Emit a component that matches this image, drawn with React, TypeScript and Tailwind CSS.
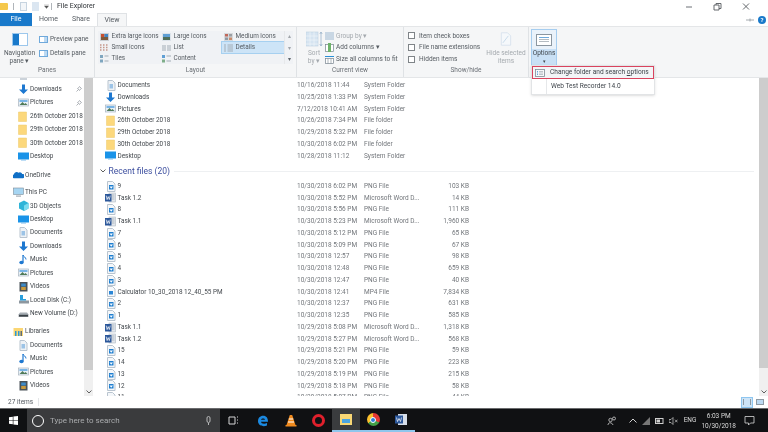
import React from "react";

const font = "font-['Roboto',sans-serif]";

function Doc() {
  return (
    <svg width="10" height="11" viewBox="0 0 10 11" className="shrink-0">
      <path d="M2 .5h4.500L9 3v7.500H2z" fill="#eef2f6" stroke="#b9c4cf" />
      <rect x="3.500" y="4" width="3.500" height="4.500" fill="#9cc3e6" />
    </svg>
  );
}
function Png() {
  return (
    <svg width="10" height="11" viewBox="0 0 10 11" className="shrink-0">
      <path d="M1.500.5h5l2.500 2.500v7.500H1.500z" fill="#f4f7fa" stroke="#b9c4cf" />
      <rect x="3" y="4" width="4.500" height="4.500" fill="#1f7fd0" />
      <path d="M3.500 5.500h3.500L5.200 7.800z" fill="#fff" />
    </svg>
  );
}
function Mp4() {
  return (
    <svg width="10" height="11" viewBox="0 0 10 11" className="shrink-0">
      <path d="M1.500.5h5l2.500 2.500v7.500H1.500z" fill="#f8fafc" stroke="#b9c4cf" />
      <rect x="3" y="5" width="4" height="3.500" fill="#2b86d6" />
    </svg>
  );
}
function Word() {
  return (
    <svg width="11" height="11" viewBox="0 0 11 11" className="shrink-0">
      <rect x="4" y="1" width="6.500" height="9" fill="#e3e7ec" stroke="#aeb8c2" strokeWidth=".6" />
      <path d="M6.500 3h3M6.500 5h3M6.500 7h3" stroke="#9aa6b2" strokeWidth=".7" />
      <rect x="0" y="2" width="6.500" height="7.500" fill="#2b579a" />
      <path d="M1.200 3.600l.9 4 1.100-3 1.100 3 .9-4" stroke="#fff" strokeWidth=".7" fill="none" />
    </svg>
  );
}
function Folder() {
  return (
    <svg width="9" height="11" viewBox="0 0 9 11" className="shrink-0">
      <path d="M.5 1h8v9.500h-8z" fill="#fcd87c" stroke="#ecc868" strokeWidth=".5" />
    </svg>
  );
}
function Desktop() {
  return (
    <svg width="11" height="11" viewBox="0 0 11 11" className="shrink-0">
      <rect x="0" y="1.500" width="11" height="7" fill="#1a93e8" />
      <rect x="3" y="8.500" width="5" height="1" fill="#7cbcec" />
    </svg>
  );
}
function DownArrow() {
  return (
    <svg width="11" height="11" viewBox="0 0 11 11" className="shrink-0">
      <path d="M4 .5h3v5h3l-4.500 4.500L1 5.500h3z" fill="#1e78d0" />
    </svg>
  );
}
function Pic() {
  return (
    <svg width="11" height="11" viewBox="0 0 11 11" className="shrink-0">
      <rect x=".5" y="2" width="10" height="7" fill="#eaf1f7" stroke="#a8b4bf" strokeWidth=".7" />
      <path d="M1.500 8l3-3 2 2 1-1 2 2z" fill="#4f7a58" />
      <rect x="1.500" y="3" width="8" height="2" fill="#79b4e6" />
    </svg>
  );
}
function Music() {
  return (
    <svg width="11" height="11" viewBox="0 0 11 11" className="shrink-0">
      <path d="M5 1v7" stroke="#1e78d0" strokeWidth="1.200" />
      <ellipse cx="3.500" cy="8.500" rx="2.200" ry="1.700" fill="#1e78d0" />
      <path d="M5 1c.5 2 3 2 3 4.500" stroke="#1e78d0" strokeWidth="1" fill="none" />
    </svg>
  );
}
function Videos() {
  return (
    <svg width="11" height="11" viewBox="0 0 11 11" className="shrink-0">
      <rect x="1.500" y="1" width="8" height="9.500" fill="#4a5258" />
      <rect x="3.200" y="2.500" width="4.600" height="3" fill="#3e8bc8" />
      <rect x="3.200" y="6" width="4.600" height="3" fill="#c99a3c" />
    </svg>
  );
}
function Cube() {
  return (
    <svg width="11" height="11" viewBox="0 0 11 11" className="shrink-0">
      <path d="M1 3l5-2.500L10.500 3v5.500L6 11 1 8.500z" fill="#2fb4d8" />
      <path d="M6 5.500L10.500 3v5.500L6 11z" fill="#7bdcf0" />
    </svg>
  );
}
function Disk() {
  return (
    <svg width="11" height="11" viewBox="0 0 11 11" className="shrink-0">
      <rect x="1" y="6.500" width="10" height="3" fill="#8d979f" />
      <rect x="2" y="1" width="3" height="5.500" fill="#2a9fdc" />
      <rect x="5" y="5" width="3" height="1.500" fill="#2a9fdc" />
    </svg>
  );
}
function Drive() {
  return (
    <svg width="11" height="11" viewBox="0 0 11 11" className="shrink-0">
      <path d="M2 4.500h7L10.500 6.500v2.500H.5V6.500z" fill="#a7aeb4" />
      <rect x="1" y="6.800" width="9" height="1.800" fill="#3a4146" />
    </svg>
  );
}
function Cloud() {
  return (
    <svg width="11" height="9" viewBox="0 0 12 9" className="shrink-0">
      <path d="M1 8.500a2 2 0 010-4 3 3 0 015-1.800 2.500 2.500 0 014 1.300 2.300 2.300 0 011 4.500z" fill="#0f6fc6" />
    </svg>
  );
}
function Pc() {
  return (
    <svg width="11" height="11" viewBox="0 0 11 11" className="shrink-0">
      <rect x=".5" y="1" width="10" height="6.500" fill="#a6d5f2" stroke="#7d8c99" strokeWidth=".6" />
      <rect x="3" y="8.500" width="5" height="1.200" fill="#a4adb5" />
    </svg>
  );
}
function Lib() {
  return (
    <svg width="11" height="11" viewBox="0 0 11 11" className="shrink-0">
      <path d="M.5 2h9.500v8H.5z" fill="#fbd673" />
      <rect x="2" y="5" width="1.500" height="5" fill="#2d9ad9" />
      <rect x="5" y="5" width="1.500" height="5" fill="#2d9ad9" />
      <rect x="7.500" y="5" width="1.500" height="5" fill="#5d6d7a" />
    </svg>
  );
}
function Pin() {
  return (
    <svg width="6" height="6" viewBox="0 0 6 6" className="shrink-0">
      <path d="M3.500.5l2 2-1 .5-1 1.500-2-2 1.500-1zM2 4l-1.500 1.500" stroke="#9aa0a6" strokeWidth=".8" fill="none" />
    </svg>
  );
}

function NavItem({ icon, label, pin, cls }: { icon: React.ReactNode; label: string; pin?: boolean; cls?: string }) {
  return (
    <div className={`flex h-[13.450px] items-center whitespace-nowrap ${cls ?? "pl-[18px]"}`}>
      <span className="flex w-[12px] shrink-0 justify-start">{icon}</span>
      <span className="text-[6.400px] text-[#43484d] leading-none">{label}</span>
      {pin && <span className="absolute left-[76px]"><Pin /></span>}
    </div>
  );
}

type Row = { icon: React.ReactNode; name: string; date: string; type: string; size?: string };

const top: Row[] = [
  { icon: <Doc />, name: "Documents", date: "10/16/2018 11:44", type: "System Folder" },
  { icon: <DownArrow />, name: "Downloads", date: "10/25/2018 1:33 PM", type: "System Folder" },
  { icon: <Pic />, name: "Pictures", date: "7/12/2018 10:41 AM", type: "System Folder" },
  { icon: <Folder />, name: "26th October 2018", date: "10/26/2018 7:34 PM", type: "File folder" },
  { icon: <Folder />, name: "29th October 2018", date: "10/29/2018 5:32 PM", type: "File folder" },
  { icon: <Folder />, name: "30th October 2018", date: "10/30/2018 6:02 PM", type: "File folder" },
  { icon: <Desktop />, name: "Desktop", date: "10/28/2018 11:12", type: "System Folder" },
];
const recent: Row[] = [
  { icon: <Png />, name: "9", date: "10/30/2018 6:02 PM", type: "PNG File", size: "103 KB" },
  { icon: <Word />, name: "Task 1.2", date: "10/30/2018 5:52 PM", type: "Microsoft Word D...", size: "14 KB" },
  { icon: <Png />, name: "8", date: "10/30/2018 5:56 PM", type: "PNG File", size: "111 KB" },
  { icon: <Word />, name: "Task 1.1", date: "10/30/2018 5:23 PM", type: "Microsoft Word D...", size: "1,960 KB" },
  { icon: <Png />, name: "7", date: "10/30/2018 5:12 PM", type: "PNG File", size: "65 KB" },
  { icon: <Png />, name: "6", date: "10/30/2018 5:09 PM", type: "PNG File", size: "67 KB" },
  { icon: <Png />, name: "5", date: "10/30/2018 12:57", type: "PNG File", size: "98 KB" },
  { icon: <Png />, name: "4", date: "10/30/2018 12:48", type: "PNG File", size: "659 KB" },
  { icon: <Png />, name: "3", date: "10/30/2018 12:47", type: "PNG File", size: "40 KB" },
  { icon: <Mp4 />, name: "Calculator 10_30_2018 12_40_55 PM", date: "10/30/2018 12:41", type: "MP4 File", size: "7,834 KB" },
  { icon: <Png />, name: "2", date: "10/30/2018 12:37", type: "PNG File", size: "631 KB" },
  { icon: <Png />, name: "1", date: "10/30/2018 12:35", type: "PNG File", size: "585 KB" },
  { icon: <Word />, name: "Task 1.1", date: "10/29/2018 5:08 PM", type: "Microsoft Word D...", size: "1,318 KB" },
  { icon: <Word />, name: "Task 1.2", date: "10/29/2018 5:27 PM", type: "Microsoft Word D...", size: "568 KB" },
  { icon: <Png />, name: "15", date: "10/29/2018 5:21 PM", type: "PNG File", size: "59 KB" },
  { icon: <Png />, name: "14", date: "10/29/2018 5:20 PM", type: "PNG File", size: "223 KB" },
  { icon: <Png />, name: "13", date: "10/29/2018 5:19 PM", type: "PNG File", size: "215 KB" },
  { icon: <Png />, name: "12", date: "10/29/2018 5:18 PM", type: "PNG File", size: "58 KB" },
  { icon: <Png />, name: "11", date: "10/29/2018 5:07 PM", type: "PNG File", size: "44 KB" },
];

function FileRow({ r }: { r: Row }) {
  return (
    <div className="flex h-[11.750px] shrink-0 items-center text-[6.500px] leading-none whitespace-nowrap">
      <div className="flex w-[204px] shrink-0 items-center gap-[1.500px] pl-[12px] text-[6.400px] text-[#43484d]">
        <span className="flex w-[11px] justify-center">{r.icon}</span>
        <span>{r.name}</span>
      </div>
      <div className="w-[67px] shrink-0 text-[#72767b]">{r.date}</div>
      <div className="w-[60px] shrink-0 text-[#72767b]">{r.type}</div>
      <div className="w-[45px] shrink-0 text-right text-[#72767b]">{r.size}</div>
    </div>
  );
}

function GalIcon({ kind }: { kind: string }) {
  const g = "#a3adb6";
  return (
    <svg width="9" height="8" viewBox="0 0 9 8" className="shrink-0">
      {kind === "extra" && (<><rect width="9" height="8" fill="#c9ced3" /><rect x="1" y="1" width="3.500" height="3" fill="#c8502f" /><rect x="4.500" y="1" width="3.500" height="3" fill="#3d86c6" /><rect x="1" y="4" width="7" height="3" fill="#7c5a3d" /></>)}
      {kind === "large" && (<><rect width="9" height="8" fill="#dce3ea" /><rect x="1" y="1" width="7" height="3" fill="#5f9fd4" /><rect x="1" y="4" width="7" height="3" fill="#4f6f5a" /></>)}
      {kind === "medium" && (<><rect width="9" height="8" fill="#d6d9dc" /><rect x="1" y="1" width="3" height="2.500" fill="#c0685a" /><rect x="5" y="1" width="3" height="2.500" fill="#9a9fa4" /><rect x="1" y="4.500" width="3" height="2.500" fill="#8f9aa3" /><rect x="5" y="4.500" width="3" height="2.500" fill="#c98a6a" /></>)}
      {kind === "small" && (<path d="M0 1h1.500M3 1h1.500M6 1h1.500M0 3.500h1.500M3 3.500h1.500M6 3.500h1.500M0 6h1.500M3 6h1.500M6 6h1.500" stroke="#c4978a" strokeWidth="1.300" />)}
      {kind === "list" && (<path d="M1 1v6M3 1v6M6 1v6M8 1v6" stroke={g} strokeWidth="1" />)}
      {kind === "details" && (<path d="M0 1h2M3.500 1h5.500M0 3h2M3.500 3h5.500M0 5h2M3.500 5h5.500M0 7h2M3.500 7h5.500" stroke={g} strokeWidth="1" />)}
      {kind === "tiles" && (<><rect x="0" y="0" width="3" height="3" fill="#7fa6bf" /><rect x="0" y="4.500" width="3" height="3" fill="#7fa6bf" /><path d="M4.500 1h4M4.500 6h4" stroke={g} /></>)}
      {kind === "content" && (<><rect x="0" y="0" width="3" height="3" fill="#5f9fd4" /><rect x="0" y="4.500" width="3" height="3" fill="#7fae8a" /><path d="M4.500 1h4.500M4.500 6h4.500" stroke={g} /></>)}
    </svg>
  );
}

function Gal({ label, kind, selected }: { label: string; kind: string; selected?: boolean }) {
  return (
    <div className={`flex h-[11px] w-[62px] items-center gap-[2.500px] pl-[2px] ${selected ? "bg-[#cde4f7] outline outline-[#a6d0f0]" : ""}`}>
      <GalIcon kind={kind} />
      <span className="text-[6.400px] leading-none text-[#555b61] whitespace-nowrap">{label}</span>
    </div>
  );
}

function Group({ w, label, children }: { w: string; label: string; children: React.ReactNode }) {
  return (
    <div className={`flex h-full shrink-0 flex-col border-r border-[#dfe2e5] ${w}`}>
      <div className="min-h-0 flex-1">{children}</div>
      <div className="h-[12px] text-center text-[6.500px] leading-[10px] text-[#6a6f75]">{label}</div>
    </div>
  );
}

function Check({ label }: { label: string }) {
  return (
    <div className="flex h-[12.300px] items-center gap-[4px]">
      <span className="block h-[7px] w-[7px] border border-[#7f8488] bg-white" />
      <span className="text-[6.500px] leading-none text-[#555b61] whitespace-nowrap">{label}</span>
    </div>
  );
}

function Chevron() {
  return (
    <svg width="6" height="4" viewBox="0 0 6 4">
      <path d="M.5.500L3 3 5.500.5" stroke="#606060" fill="none" />
    </svg>
  );
}

function TaskIcon({ children, cls }: { children: React.ReactNode; cls?: string }) {
  return <div className={`flex w-[27.500px] items-center justify-center ${cls ?? ""}`}>{children}</div>;
}

export default function App() {
  return (
    <div className={`flex h-[432px] w-[768px] flex-col overflow-hidden bg-white blur-[0.3px] ${font}`}>
      {/* Title bar */}
      <div className="flex h-[13px] shrink-0 items-center">
        <div className="flex w-[57px] items-center">
          <span className="block h-[7px] w-[8px] rounded-r-[1px] bg-[#f5c84c]" />
          <span className="ml-[5px] block h-[7px] w-px bg-[#b0b5ba]" />
          <span className="ml-[6px] block h-[9px] w-[7px] border border-[#c7d4e0] bg-[#f3f6f9]" />
          <span className="ml-[5px] block h-[9px] w-[7px] bg-[#dbe6f1]" />
          <svg width="5" height="5" viewBox="0 0 5 5" className="ml-[5px]"><path d="M0 1h5M.5 2h4L2.500 4.500z" fill="#555" stroke="#555" strokeWidth=".3" /></svg>
          <span className="ml-[2px] block h-[7px] w-px bg-[#b0b5ba]" />
        </div>
        <span className="text-[7px] leading-none text-[#2f3337]">File Explorer</span>
        <div className="ml-auto flex items-center">
          <svg width="22" height="10" viewBox="0 0 22 10"><path d="M6 5h6" stroke="#6d7176" strokeWidth="1" /></svg>
          <svg width="28" height="10" viewBox="0 0 28 10" className="ml-[2px]"><path d="M10 3h5v5h-5zM12 3V1.500h5v5h-2" fill="none" stroke="#55595e" strokeWidth=".9" /></svg>
          <svg width="30" height="10" viewBox="0 0 30 10" className="mr-[6px]"><path d="M11 1.500l6 6M17 1.500l-6 6" stroke="#55595e" strokeWidth=".9" /></svg>
        </div>
      </div>

      {/* Tabs */}
      <div className="flex h-[13px] shrink-0 items-stretch text-[7px] leading-none">
        <div className="flex w-[32px] items-center justify-center bg-[#1979ca] text-white">File</div>
        <div className="flex w-[33px] items-center justify-center text-[#555b61]">Home</div>
        <div className="flex w-[32px] items-center justify-center text-[#555b61]">Share</div>
        <div className="flex w-[30px] items-center justify-center border border-b-0 border-[#dfe2e5] bg-[#f5f6f7] text-[#555b61]">View</div>
        <div className="ml-auto flex items-center gap-[4px] pr-[2px]">
          <svg width="8" height="6" viewBox="0 0 8 6"><path d="M0 3h5M4 1.500v3M5 3h3" stroke="#9aa0a6" strokeWidth=".9" /></svg>
          <span className="flex h-[8px] w-[8px] items-center justify-center rounded-full bg-[#1979ca] text-[6px] font-bold text-white">?</span>
        </div>
      </div>

      {/* Ribbon */}
      <div className="flex h-[52px] shrink-0 border-y border-[#e4e6e8] bg-[#f5f6f7]">
        <Group w="w-[95px]" label="Panes">
          <div className="flex h-full">
            <div className="flex w-[39px] flex-col items-center pt-[6px]">
              <div className="flex h-[13px] w-[16px] border border-[#9cc7ec] bg-white"><span className="block h-full w-[6px] bg-[#1979ca]" /></div>
              <span className="mt-[3px] text-center text-[6.500px] leading-[8px] text-[#555b61]">Navigation<br />pane ▾</span>
            </div>
            <div className="flex flex-col gap-[7px] pt-[9px]">
              {["Preview pane", "Details pane"].map((t) => (
                <div key={t} className="flex items-center gap-[2px]">
                  <span className="flex h-[7px] w-[9px] justify-end border border-[#6fa9db] bg-white"><span className="block h-full w-[3px] bg-[#bcd9f2]" /></span>
                  <span className="text-[6.500px] leading-none text-[#555b61]">{t}</span>
                </div>
              ))}
            </div>
          </div>
        </Group>
        <Group w="w-[202px]" label="Layout">
          <div className="ml-[3px] mt-[4px] flex h-[33px] w-[195px] bg-[#f0f2f5]">
            <div className="w-[62px]">
              <Gal kind="extra" label="Extra large icons" />
              <Gal kind="small" label="Small icons" />
              <Gal kind="tiles" label="Tiles" />
            </div>
            <div className="w-[62px]">
              <Gal kind="large" label="Large icons" />
              <Gal kind="list" label="List" />
              <Gal kind="content" label="Content" />
            </div>
            <div className="w-[62px]">
              <Gal kind="medium" label="Medium icons" />
              <Gal kind="details" label="Details" selected />
            </div>
            <div className="flex w-[9px] flex-col items-center justify-between border-l border-[#e6e8ea] py-[2px] text-[6px] leading-none text-[#a0a5aa]">
              <span>▴</span><span>▾</span><span className="text-[#60666c]">▾</span>
            </div>
          </div>
        </Group>
        <Group w="w-[107px]" label="Current view">
          <div className="flex h-full pl-[6px]">
            <div className="flex w-[22px] flex-col items-center pt-[4px]">
              <svg width="17" height="16" viewBox="0 0 17 16">
                <rect x="0" y="1" width="12" height="14" fill="#d6e4f1" stroke="#bcd0e2" strokeWidth=".6" />
                <path d="M4 1v14M8 1v14M0 5h12M0 9h12M0 13h12" stroke="#f2f6fa" strokeWidth=".6" />
                <path d="M15 1v14M13.800 3L15 1l1.200 2M13.800 13l1.200 2 1.200-2" fill="none" stroke="#9ab4cb" strokeWidth=".8" />
              </svg>
              <span className="mt-[2px] text-center text-[6.500px] leading-[8px] text-[#a4a9ae]">Sort<br />by ▾</span>
            </div>
            <div className="flex flex-col pt-[3px]">
              <div className="flex h-[12.300px] items-center gap-[2px]"><span className="block h-[8px] w-[9px] bg-[#c9d7e4]" /><span className="text-[6.500px] leading-none text-[#a4a9ae]">Group by ▾</span></div>
              <div className="flex h-[12.300px] items-center gap-[2px]">
                <svg width="9" height="9" viewBox="0 0 9 9"><rect x=".5" y="1.500" width="8" height="7" fill="#fff" stroke="#77848f" strokeWidth=".7" /><rect x="3" y="0" width="3" height="9" fill="#6fb36a" /></svg>
                <span className="text-[6.500px] leading-none text-[#555b61]">Add columns ▾</span>
              </div>
              <div className="flex h-[12.300px] items-center gap-[2px]">
                <svg width="9" height="9" viewBox="0 0 9 9"><path d="M0 1.500h9" stroke="#2a8fd6" /><rect x=".5" y="3.500" width="8" height="5" fill="#fff" stroke="#77848f" strokeWidth=".7" /><path d="M3 3.500v5M6 3.500v5" stroke="#77848f" strokeWidth=".6" /></svg>
                <span className="text-[6.500px] leading-none text-[#555b61]">Size all columns to fit</span>
              </div>
            </div>
          </div>
        </Group>
        <Group w="w-[125px]" label="Show/hide">
          <div className="flex h-full pl-[4px] pt-[3px]">
            <div className="flex w-[76px] flex-col">
              <Check label="Item check boxes" />
              <Check label="File name extensions" />
              <Check label="Hidden items" />
            </div>
            <div className="flex w-[44px] flex-col items-center pt-[2px]">
              <svg width="14" height="18" viewBox="0 0 14 18"><path d="M1 1h8l4 4v12H1z" fill="#f5f8fb" stroke="#d3e0ec" /><path d="M3 14l7-9" stroke="#bdd3e6" /></svg>
              <span className="mt-[3px] text-center text-[6.500px] leading-[8px] whitespace-nowrap text-[#a4a9ae]">Hide selected<br />items</span>
            </div>
          </div>
        </Group>
        <div className="ml-[2px] mt-[2px] flex h-[37px] w-[26px] flex-col border border-[#a6cdef]">
          <div className="flex h-[20px] items-center justify-center bg-[#eaf2fa]">
            <span className="flex h-[12px] w-[16px] flex-col justify-center gap-px border border-[#8b96a0] bg-white pl-[2px]">
              <span className="block h-px w-[10px] bg-[#6fa9db]" />
              <span className="block h-px w-[10px] bg-[#b5bcc2]" />
              <span className="block h-px w-[10px] bg-[#b5bcc2]" />
            </span>
          </div>
          <div className="flex flex-1 flex-col items-center bg-[#c9e0f5] text-[6.500px] leading-[8px] text-[#3f454b]">
            <span>Options</span><span className="text-[5px]">▾</span>
          </div>
        </div>
      </div>

      {/* Main */}
      <div className="relative flex min-h-0 flex-1">
        <div className="relative w-[84px] shrink-0 overflow-hidden pt-[4.500px]">
          <span className="absolute left-[20px] top-0 block h-[2px] w-[7px] bg-[#ccd3da]" />
          <NavItem icon={<DownArrow />} label="Downloads" pin />
          <NavItem icon={<Pic />} label="Pictures" pin />
          <NavItem icon={<Folder />} label="26th October 2018" />
          <NavItem icon={<Folder />} label="29th October 2018" />
          <NavItem icon={<Folder />} label="30th October 2018" />
          <NavItem icon={<Desktop />} label="Desktop" />
          <div className="h-[5px]" />
          <NavItem cls="pl-[13px]" icon={<Cloud />} label="OneDrive" />
          <div className="h-[4px]" />
          <NavItem cls="pl-[13px]" icon={<Pc />} label="This PC" />
          <NavItem icon={<Cube />} label="3D Objects" />
          <NavItem icon={<Desktop />} label="Desktop" />
          <NavItem icon={<Doc />} label="Documents" />
          <NavItem icon={<DownArrow />} label="Downloads" />
          <NavItem icon={<Music />} label="Music" />
          <NavItem icon={<Pic />} label="Pictures" />
          <NavItem icon={<Videos />} label="Videos" />
          <NavItem icon={<Disk />} label="Local Disk (C:)" />
          <NavItem icon={<Drive />} label="New Volume (D:)" />
          <div className="h-[5px]" />
          <NavItem cls="pl-[13px]" icon={<Lib />} label="Libraries" />
          <NavItem icon={<Doc />} label="Documents" />
          <NavItem icon={<Music />} label="Music" />
          <NavItem icon={<Pic />} label="Pictures" />
          <NavItem icon={<Videos />} label="Videos" />
        </div>
        <div className="flex w-[9px] shrink-0 flex-col bg-[#f0f0f0]">
          <div className="h-[292px] bg-[#cdcdcd]" />
          <div className="flex flex-1 items-end justify-center pb-[2px]"><Chevron /></div>
        </div>
        <div className="flex min-w-0 flex-1 flex-col overflow-hidden pt-[1.500px]">
          {top.map((r) => <FileRow key={r.name} r={r} />)}
          <div className="flex h-[18.500px] shrink-0 items-center pl-[7px] pr-[5px]">
            <Chevron />
            <span className="ml-[2.500px] text-[8.500px] leading-none text-[#3d4f9f] whitespace-nowrap">Recent files (20)</span>
            <span className="ml-[4px] h-px flex-1 bg-[#eef0f2]" />
          </div>
          {recent.map((r, i) => <FileRow key={i} r={r} />)}
        </div>
        <div className="flex w-[9px] shrink-0 flex-col bg-[#f0f0f0]">
          <div className="h-[290px] bg-[#cdcdcd]" />
          <div className="flex flex-1 items-end justify-center pb-[2px]"><Chevron /></div>
        </div>

        {/* Dropdown */}
        <div className="absolute left-[531px] top-[-13px] h-[30px] w-[124px] border border-[#e2e4e6] bg-white shadow-sm">
          <div className="absolute inset-y-0 left-[14px] w-px bg-[#e6e8ea]" />
          <div className="relative flex h-[13px] items-center border border-[#d9435e] bg-[#f3f5f7]">
            <svg width="10" height="8" viewBox="0 0 10 8" className="ml-[1.500px] shrink-0">
              <rect x=".5" y=".5" width="9" height="7" fill="#f6f8fa" stroke="#7f8a94" strokeWidth=".8" />
              <path d="M2 2.500h1M2 4h1M2 5.500h1" stroke="#3f8fd2" strokeWidth=".8" />
              <path d="M4 2.500h4M4 4h4M4 5.500h4" stroke="#a5adb5" strokeWidth=".7" />
            </svg>
            <span className="ml-[5.500px] text-[6.600px] leading-none text-[#3f454b] whitespace-nowrap">Change folder and search <span className="underline">o</span>ptions</span>
          </div>
          <div className="flex h-[15px] items-center pl-[19px]">
            <span className="text-[6.600px] leading-none text-[#3f454b] whitespace-nowrap">Web Test Recorder 14.0</span>
          </div>
        </div>
      </div>

      {/* Status bar */}
      <div className="flex h-[12px] shrink-0 items-center pl-[8px]">
        <span className="text-[6.500px] leading-none text-[#555b61]">27 items</span>
        <span className="ml-[5px] h-[8px] w-px bg-[#e4e6e8]" />
        <div className="ml-auto flex items-center gap-[3px] pr-[4px]">
          <span className="flex h-[11px] w-[12px] items-center justify-center border border-[#8ec6f0] bg-[#cde4f7]"><span className="block h-[6px] w-[8px] border-x border-[#8e9aa4]" /></span>
          <span className="block h-[6px] w-[8px] border border-[#8e9aa4] bg-[#bcd9f2]" />
        </div>
      </div>

      {/* Taskbar */}
      <div className="flex h-[24px] shrink-0 items-stretch border-t border-[#6a6b6d] bg-[#101113]">
        <div className="flex w-[27px] items-center justify-center">
          <svg width="9" height="9" viewBox="0 0 9 9"><path d="M0 1.300L3.800.700v3.500H0zM4.400.600L9 0v4.200H4.400zM0 4.800h3.800v3.500L0 7.700zM4.400 4.800H9V9l-4.600-.6z" fill="#fff" /></svg>
        </div>
        <div className="flex w-[193px] items-center bg-[#3a3b3d] pl-[5px]">
          <span className="block h-[12px] w-[12px] rounded-full border-[1.500px] border-white" />
          <span className="ml-[6px] text-[8px] leading-none text-[#a9abad]">Type here to search</span>
          <svg className="ml-auto mr-[8px]" width="7" height="10" viewBox="0 0 7 10"><rect x="2" y=".5" width="3" height="6" rx="1.500" fill="none" stroke="#b8b9ba" /><path d="M3.500 7v2" stroke="#b8b9ba" /></svg>
        </div>
        <div className="flex w-[29.500px] items-center justify-start pl-[8px]">
          <svg width="11" height="9" viewBox="0 0 11 9"><path d="M1 1h6v7H1zM9 1h1M9 4h1M9 7h1" fill="none" stroke="#d5d6d7" /></svg>
        </div>
        <TaskIcon>
          <svg width="12" height="12" viewBox="0 0 12 12"><path d="M1 6.500C1 3 3 .8 6.200.8 9.400.8 11 3 11 6.800H4c.1 2 3.500 2.700 6 1.200v2.500c-3.500 1.500-8.500.6-9-4zM4 4.800h4C7.900 3 4.400 3 4 4.800z" fill="#1b89e0" /></svg>
        </TaskIcon>
        <TaskIcon>
          <svg width="12" height="13" viewBox="0 0 12 13"><path d="M4.800 1h2.400l3.300 10H1.500z" fill="#f08a1d" /><path d="M3.800 5h4.400M3 8h6" stroke="#fff" /><rect x="0.500" y="11" width="11" height="1.500" fill="#f08a1d" /></svg>
        </TaskIcon>
        <TaskIcon>
          <span className="block h-[13px] w-[13px] rounded-full border-[3px] border-[#e0202c]" />
        </TaskIcon>
        <TaskIcon cls="border-b-2 border-[#8ec6ec] bg-[#3a3c3e]">
          <svg width="12" height="11" viewBox="0 0 12 11"><rect y="0" width="12" height="11" fill="#f7d775" /><rect x="2" y="5" width="8" height="4" fill="#4aa4e0" /></svg>
        </TaskIcon>
        <TaskIcon cls="border-b-2 border-[#8ec6ec]">
          <span className="flex h-[13px] w-[13px] items-center justify-center rounded-full bg-[conic-gradient(#e53935_0_33%,#43a047_33%_66%,#fbc02d_66%_100%)]"><span className="block h-[6px] w-[6px] rounded-full border border-white bg-[#2f80d8]" /></span>
        </TaskIcon>
        <TaskIcon cls="border-b-2 border-[#8ec6ec]">
          <svg width="12" height="11" viewBox="0 0 12 11"><rect x="3" y="0" width="9" height="11" fill="#d7dee8" /><rect x="0" y="1.500" width="8" height="8" fill="#2b579a" /><path d="M1.500 3.500l1 4 1.500-3 1.500 3 1-4" stroke="#fff" strokeWidth=".7" fill="none" /></svg>
        </TaskIcon>
        <div className="ml-auto flex items-center text-white">
          <svg width="10" height="10" viewBox="0 0 10 10" className="mr-[12px]"><circle cx="3.500" cy="4" r="1.700" fill="none" stroke="#d0d0d0" strokeWidth=".8" /><circle cx="7" cy="2.500" r="1.500" fill="none" stroke="#d0d0d0" strokeWidth=".8" /><path d="M1 9c0-3 4-3 5 0" fill="none" stroke="#d0d0d0" strokeWidth=".8" /></svg>
          <svg width="8" height="5" viewBox="0 0 8 5" className="mr-[5px]"><path d="M.5 4.500L4 1l3.500 3.500" fill="none" stroke="#d0d0d0" /></svg>
          <svg width="8" height="8" viewBox="0 0 8 8" className="mr-[5px]"><path d="M0 8L8 0v8z" fill="#777" /></svg>
          <svg width="9" height="6" viewBox="0 0 9 6" className="mr-[5px]"><rect x=".5" y=".5" width="7.500" height="5" fill="none" stroke="#d0d0d0" /><rect x="1.500" y="1.500" width="3.500" height="3" fill="#d0d0d0" /></svg>
          <svg width="9" height="8" viewBox="0 0 9 8" className="mr-[6px]"><path d="M0 2.500h2L4 .5v7L2 5.500H0z" fill="none" stroke="#d0d0d0" strokeWidth=".7" /><path d="M6 2.700l2.500 2.600M8.500 2.700L6 5.300" stroke="#d0d0d0" strokeWidth=".7" /></svg>
          <span className="mr-[5px] text-[6.500px] leading-none text-[#d8d8d8]">ENG</span>
          <div className="mr-[8px] flex flex-col items-center text-[6.500px] leading-[10px] text-[#d8d8d8]">
            <span>6:03 PM</span><span>10/30/2018</span>
          </div>
          <svg width="11" height="10" viewBox="0 0 11 10" className="mr-[13px]"><path d="M1 .5h9v6.500H6.500L4.500 9V7H1z" fill="none" stroke="#d8d8d8" strokeWidth=".8" /></svg>
        </div>
      </div>
    </div>
  );
}
